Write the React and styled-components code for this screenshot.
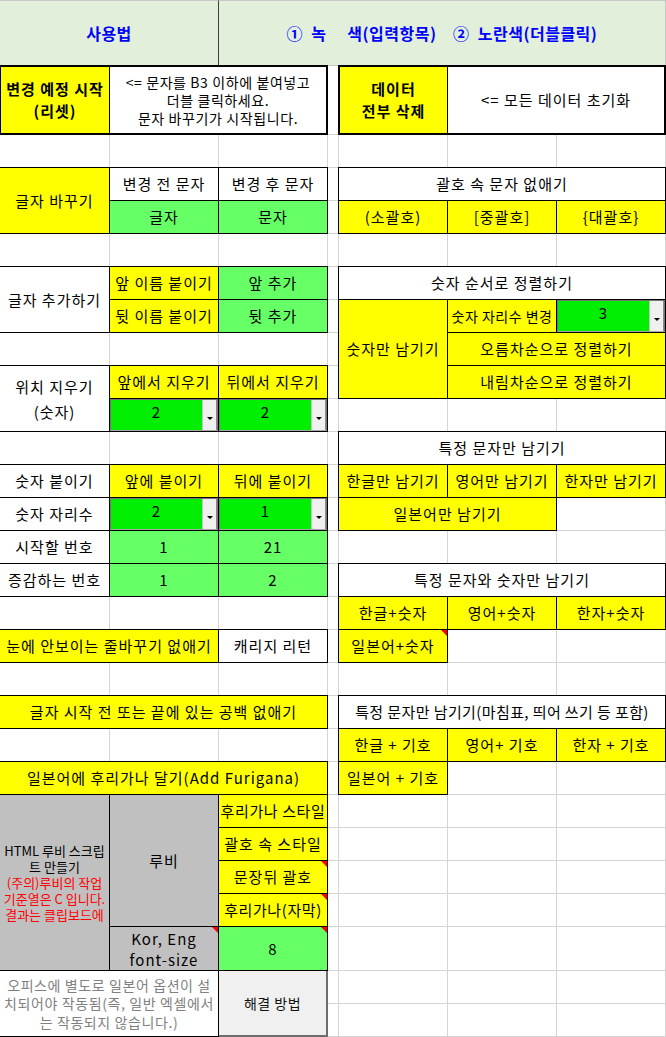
import React from 'react'
import styled, { createGlobalStyle, css } from 'styled-components'

const GlobalStyle = createGlobalStyle`
  *, *::before, *::after {
    box-sizing: border-box;
  }
  body {
    margin: 0;
    background: #fff;
    color: #000;
    font-family: "Noto Sans CJK KR", "Noto Sans", sans-serif;
  }
`

const YELLOW = '#ffff00'
const GREEN = '#66ff66'
const GRAY = '#c0c0c0'

const COLS = [110, 109, 109, 11, 109, 109, 109]
const ROW_COUNT = 29

const place = css`
  grid-row: ${p => p.$r} / span ${p => p.$rs || 1};
  grid-column: ${p => p.$c} / span ${p => p.$cs || 1};
`

const Sheet = styled.div`
  display: grid;
  grid-template-columns: ${COLS.map(w => w + 'px').join(' ')};
  grid-template-rows: 66px 69px repeat(24, 33px) 44px 33px 33px;
  width: 666px;
  height: 1037px;
  overflow: hidden;
`

const GridCell = styled.div`
  ${place}
  border-right: 1px solid #d4d4d4;
  border-bottom: 1px solid #d4d4d4;
`

const HeaderCell = styled.div`
  ${place}
  display: flex;
  align-items: center;
  justify-content: center;
  background: #e2efda;
  border-top: 1px solid #c8c8c8;
  border-bottom: 1px solid #c8c8c8;
  border-right: 1px solid ${p => (p.$dark ? '#404040' : '#c8c8c8')};
  color: #0000ff;
  font-size: 16px;
  font-weight: 700;
  letter-spacing: 0.5px;
  white-space: pre;
`

const Cell = styled.div`
  ${place}
  position: relative;
  margin: -1px 0 0 -1px;
  display: flex;
  flex-direction: column;
  align-items: center;
  justify-content: center;
  border: 1px solid #000;
  background: ${p => p.$bg || '#fff'};
  color: ${p => p.$color || '#000'};
  font-size: ${p => p.$size || 15}px;
  font-weight: ${p => (p.$bold ? 700 : 400)};
  letter-spacing: ${p => (p.$ls ?? 1)}px;
  line-height: ${p => p.$lh || '18px'};
  text-align: center;
  white-space: nowrap;
  overflow: hidden;

  ${p => p.$note && css`
    &::after {
      content: '';
      position: absolute;
      top: 0;
      right: 0;
      border-top: 6px solid #ff0000;
      border-left: 6px solid transparent;
    }
  `}
`

const Line = styled.span`
  display: block;
  color: ${p => p.$color || 'inherit'};
`

const Panel = styled.div`
  ${place}
  margin: -1px 0 0 -1px;
  display: grid;
  grid-template-columns: ${p => p.$first}px 1fr;
  border: 2px solid #000;
`

const PanelLabel = styled.div`
  display: flex;
  flex-direction: column;
  align-items: center;
  justify-content: center;
  background: ${YELLOW};
  border-right: 1px solid #000;
  font-size: 15px;
  font-weight: 700;
  letter-spacing: 1px;
  line-height: 22px;
  text-align: center;
`

const PanelNote = styled.div`
  display: flex;
  flex-direction: column;
  align-items: center;
  justify-content: center;
  background: #fff;
  font-size: ${p => p.$size}px;
  letter-spacing: ${p => p.$ls}px;
  line-height: ${p => p.$lh};
  text-align: center;
  white-space: nowrap;
`

const SelectBox = styled.div`
  flex: 1;
  align-self: stretch;
  display: flex;
  border: 1px solid #767676;
  border-bottom-color: #a8a8a8;
  background: #00ee00;
`

const SelectValue = styled.div`
  flex: 1;
  display: flex;
  align-items: center;
  justify-content: center;
  padding-bottom: 6px;
  font-size: 15px;
`

const SelectButton = styled.div`
  width: 15px;
  display: flex;
  align-items: center;
  justify-content: center;
  padding-top: 6px;
  background: #f0f0f0;
  border-left: 1px solid #c4c4c4;
  border-right: 1px solid #8a8a8a;

  &::before {
    content: '';
    border-top: 3px solid #000;
    border-left: 3px solid transparent;
    border-right: 3px solid transparent;
  }
`

const ActionButton = styled.div`
  ${place}
  margin: -1px 0 0 -1px;
  display: flex;
  align-items: center;
  justify-content: center;
  background: #f0f0f0;
  border: 1px solid #a0a0a0;
  border-right: 2px solid #6e6e6e;
  border-bottom: 2px solid #6e6e6e;
  color: #111;
  font-size: 14px;
  letter-spacing: 0.5px;
`

function Select({ r, c, value }) {
  return (
    <Cell $r={r} $c={c}>
      <SelectBox>
        <SelectValue>{value}</SelectValue>
        <SelectButton />
      </SelectBox>
    </Cell>
  )
}

const gridCells = []
for (let r = 2; r <= ROW_COUNT; r++) {
  for (let c = 1; c <= COLS.length; c++) {
    gridCells.push({ r, c })
  }
}

// 왼쪽 표
const leftCells = [
  { r: 4, c: 1, rs: 2, bg: YELLOW, text: '글자 바꾸기' },
  { r: 4, c: 2, text: '변경 전 문자' },
  { r: 4, c: 3, text: '변경 후 문자' },
  { r: 5, c: 2, bg: GREEN, text: '글자' },
  { r: 5, c: 3, bg: GREEN, text: '문자' },

  { r: 7, c: 1, rs: 2, text: '글자 추가하기' },
  { r: 7, c: 2, bg: YELLOW, text: '앞 이름 붙이기' },
  { r: 7, c: 3, bg: GREEN, text: '앞 추가' },
  { r: 8, c: 2, bg: YELLOW, text: '뒷 이름 붙이기' },
  { r: 8, c: 3, bg: GREEN, text: '뒷 추가' },

  { r: 10, c: 1, rs: 2, lh: '25px', lines: ['위치 지우기', '(숫자)'] },
  { r: 10, c: 2, bg: YELLOW, text: '앞에서 지우기' },
  { r: 10, c: 3, bg: YELLOW, text: '뒤에서 지우기' },

  { r: 13, c: 1, text: '숫자 붙이기' },
  { r: 13, c: 2, bg: YELLOW, text: '앞에 붙이기' },
  { r: 13, c: 3, bg: YELLOW, text: '뒤에 붙이기' },
  { r: 14, c: 1, text: '숫자 자리수' },
  { r: 15, c: 1, text: '시작할 번호' },
  { r: 15, c: 2, bg: GREEN, text: '1' },
  { r: 15, c: 3, bg: GREEN, text: '21' },
  { r: 16, c: 1, text: '증감하는 번호' },
  { r: 16, c: 2, bg: GREEN, text: '1' },
  { r: 16, c: 3, bg: GREEN, text: '2' },

  { r: 18, c: 1, cs: 2, bg: YELLOW, text: '눈에 안보이는 줄바꾸기 없애기' },
  { r: 18, c: 3, text: '캐리지 리턴' },

  { r: 20, c: 1, cs: 3, bg: YELLOW, text: '글자 시작 전 또는 끝에 있는 공백 없애기' },
  { r: 22, c: 1, cs: 3, bg: YELLOW, text: '일본어에 후리가나 달기(Add Furigana)' },

  { r: 23, c: 2, rs: 4, bg: GRAY, text: '루비' },
  { r: 23, c: 3, bg: YELLOW, ls: 0.6, text: '후리가나 스타일' },
  { r: 24, c: 3, bg: YELLOW, text: '괄호 속 스타일' },
  { r: 25, c: 3, bg: YELLOW, note: true, text: '문장뒤 괄호' },
  { r: 26, c: 3, bg: YELLOW, note: true, ls: 0.6, text: '후리가나(자막)' },
  { r: 27, c: 2, bg: GRAY, note: true, lh: '21px', lines: ['Kor, Eng', 'font-size'] },
  { r: 27, c: 3, bg: GREEN, note: true, text: '8' },
]

// 오른쪽 표
const rightCells = [
  { r: 4, c: 5, cs: 3, text: '괄호 속 문자 없애기' },
  { r: 5, c: 5, bg: YELLOW, text: '(소괄호)' },
  { r: 5, c: 6, bg: YELLOW, text: '[중괄호]' },
  { r: 5, c: 7, bg: YELLOW, text: '{대괄호}' },

  { r: 7, c: 5, cs: 3, text: '숫자 순서로 정렬하기' },
  { r: 8, c: 5, rs: 3, bg: YELLOW, text: '숫자만 남기기' },
  { r: 8, c: 6, bg: YELLOW, size: 14, ls: 0.5, text: '숫자 자리수 변경' },
  { r: 9, c: 6, cs: 2, bg: YELLOW, text: '오름차순으로 정렬하기' },
  { r: 10, c: 6, cs: 2, bg: YELLOW, text: '내림차순으로 정렬하기' },

  { r: 12, c: 5, cs: 3, text: '특정 문자만 남기기' },
  { r: 13, c: 5, bg: YELLOW, text: '한글만 남기기' },
  { r: 13, c: 6, bg: YELLOW, text: '영어만 남기기' },
  { r: 13, c: 7, bg: YELLOW, text: '한자만 남기기' },
  { r: 14, c: 5, cs: 2, bg: YELLOW, text: '일본어만 남기기' },

  { r: 16, c: 5, cs: 3, text: '특정 문자와 숫자만 남기기' },
  { r: 17, c: 5, bg: YELLOW, text: '한글+숫자' },
  { r: 17, c: 6, bg: YELLOW, text: '영어+숫자' },
  { r: 17, c: 7, bg: YELLOW, text: '한자+숫자' },
  { r: 18, c: 5, bg: YELLOW, note: true, text: '일본어+숫자' },

  { r: 20, c: 5, cs: 3, ls: 0.4, text: '특정 문자만 남기기(마침표, 띄어 쓰기 등 포함)' },
  { r: 21, c: 5, bg: YELLOW, text: '한글 + 기호' },
  { r: 21, c: 6, bg: YELLOW, text: '영어+ 기호' },
  { r: 21, c: 7, bg: YELLOW, text: '한자 + 기호' },
  { r: 22, c: 5, bg: YELLOW, text: '일본어 + 기호' },
]

const selects = [
  { r: 11, c: 2, value: '2' },
  { r: 11, c: 3, value: '2' },
  { r: 14, c: 2, value: '2' },
  { r: 14, c: 3, value: '1' },
  { r: 8, c: 7, value: '3' },
]

function renderCell(cell, i) {
  return (
    <Cell
      key={i}
      $r={cell.r}
      $c={cell.c}
      $rs={cell.rs}
      $cs={cell.cs}
      $bg={cell.bg}
      $size={cell.size}
      $ls={cell.ls}
      $lh={cell.lh}
      $note={cell.note}
    >
      {cell.lines ? cell.lines.map(l => <Line key={l}>{l}</Line>) : cell.text}
    </Cell>
  )
}

export default function App() {
  return (
    <>
      <GlobalStyle />
      <Sheet>
        {gridCells.map(g => (
          <GridCell key={`${g.r}-${g.c}`} $r={g.r} $c={g.c} />
        ))}

        <HeaderCell $r={1} $c={1} $cs={2} $dark>사용법</HeaderCell>
        <HeaderCell $r={1} $c={3} $cs={5}>{'①  녹     색(입력항목)    ②  노란색(더블클릭)'}</HeaderCell>

        <Panel $r={2} $c={1} $cs={3} $first={109}>
          <PanelLabel>
            <Line>변경 예정 시작</Line>
            <Line>(리셋)</Line>
          </PanelLabel>
          <PanelNote $size={14} $ls={0.6} $lh="18px">
            <Line>{'<= 문자를 B3 이하에 붙여넣고'}</Line>
            <Line>더블 클릭하세요.</Line>
            <Line>문자 바꾸기가 시작됩니다.</Line>
          </PanelNote>
        </Panel>
        <Panel $r={2} $c={5} $cs={3} $first={108}>
          <PanelLabel>
            <Line>데이터</Line>
            <Line>전부 삭제</Line>
          </PanelLabel>
          <PanelNote $size={15} $ls={1} $lh="20px">{'<= 모든 데이터 초기화'}</PanelNote>
        </Panel>

        {leftCells.map(renderCell)}
        {rightCells.map((c, i) => renderCell(c, 'r' + i))}
        {selects.map(s => (
          <Select key={`${s.r}-${s.c}`} r={s.r} c={s.c} value={s.value} />
        ))}

        <Cell $r={23} $c={1} $rs={5} $bg={GRAY} $size={13} $ls={0} $lh="16px">
          <Line>HTML 루비 스크립</Line>
          <Line>트 만들기</Line>
          <Line $color="#ff0000">(주의)루비의 작업</Line>
          <Line $color="#ff0000">기준열은 C 입니다.</Line>
          <Line $color="#ff0000">결과는 클립보드에</Line>
        </Cell>

        <Cell $r={28} $c={1} $rs={2} $cs={2} $color="#808080" $size={14} $ls={0.6} $lh="18.5px">
          <Line>오피스에 별도로 일본어 옵션이 설</Line>
          <Line>치되어야 작동됨(즉, 일반 엑셀에서</Line>
          <Line>는 작동되지 않습니다.)</Line>
        </Cell>
        <ActionButton $r={28} $c={3} $rs={2}>해결 방법</ActionButton>
      </Sheet>
    </>
  )
}
